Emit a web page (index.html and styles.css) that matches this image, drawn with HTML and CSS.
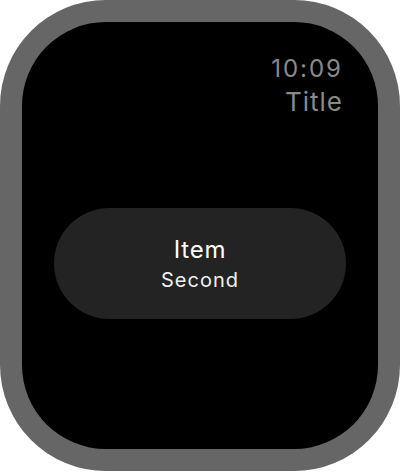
FILE: index.html
```html
<!DOCTYPE html>
<html lang="en">
<head>
<meta charset="utf-8">
<title>Watch</title>
<link rel="stylesheet" href="styles.css">
</head>
<body>
<div class="frame">
  <div class="screen">
    <header class="status">
      <div class="time">10:09</div>
      <div class="title">Title</div>
    </header>
    <div class="pill">
      <div class="pill-title">Item</div>
      <div class="pill-sub">Second</div>
    </div>
  </div>
</div>
</body>
</html>
```
FILE: styles.css
```css
html, body {
  margin: 0;
  padding: 0;
  background: #ffffff;
}
body {
  font-family: Inter, "Noto Sans", sans-serif;
}
.frame {
  width: 400px;
  height: 471px;
  box-sizing: border-box;
  padding: 22px;
  background: #666666;
  border-radius: 106px;
}
.screen {
  height: 100%;
  background: #000000;
  border-radius: 84px;
  display: flex;
  flex-direction: column;
}
.status {
  padding: 33px 35px 0 0;
  text-align: right;
  color: #8a8a8a;
}
.time {
  font-size: 24px;
  line-height: 28px;
  letter-spacing: 2px;
}
.title {
  font-size: 26px;
  line-height: 30px;
  margin-top: 4px;
  letter-spacing: 1px;
}
.pill {
  margin: 91px 32px 0;
  height: 111px;
  border-radius: 56px;
  background: #232323;
  display: flex;
  flex-direction: column;
  align-items: center;
  justify-content: center;
  color: #ffffff;
}
.pill-title {
  font-size: 24px;
  line-height: 28px;
  letter-spacing: 0.8px;
}
.pill-sub {
  font-size: 20px;
  line-height: 24px;
  margin-top: 4px;
  letter-spacing: 1px;
  color: #f0f0f0;
}
```
